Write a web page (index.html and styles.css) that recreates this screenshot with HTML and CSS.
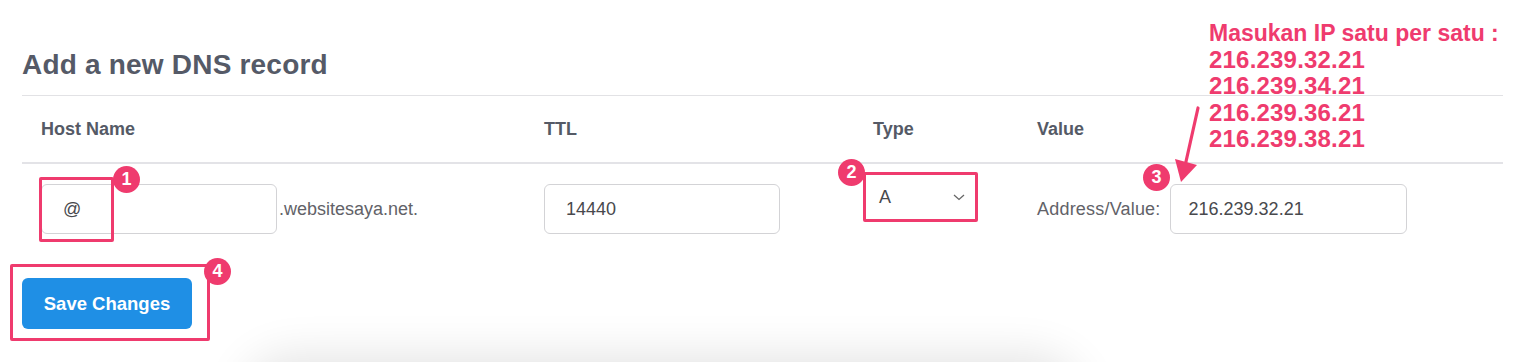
FILE: index.html
```html
<!DOCTYPE html>
<html lang="id">
<head>
<meta charset="utf-8">
<title>Add a new DNS record</title>
<link rel="stylesheet" href="styles.css">
</head>
<body>
<div class="page">
  <h1 class="title">Add a new DNS record</h1>
  <div class="table">
    <div class="row head">
      <div class="cell">Host Name</div>
      <div class="cell">TTL</div>
      <div class="cell">Type</div>
      <div class="cell">Value</div>
    </div>
    <div class="row body">
      <div class="cell host">
        <div class="input w236">@</div>
        <span class="suffix">.websitesaya.net.</span>
      </div>
      <div class="cell">
        <div class="input w236">14440</div>
      </div>
      <div class="cell">
        <div class="select">
          <span>A</span>
          <svg class="chev" width="12" height="7" viewBox="0 0 12 7"><path d="M1 1 L6 5.5 L11 1" fill="none" stroke="#666" stroke-width="1.3"/></svg>
        </div>
      </div>
      <div class="cell value">
        <span class="label">Address/Value:</span>
        <div class="input w237">216.239.32.21</div>
      </div>
    </div>
  </div>
  <button class="save">Save Changes</button>
  <div class="shadow-card"></div>

  <div class="note">Masukan IP satu per satu :<br><span class="ip">216.239.32.21<br>216.239.34.21<br>216.239.36.21<br>216.239.38.21</span></div>
  <svg class="arrow" width="40" height="90" viewBox="0 0 40 90">
    <path d="M26 4 L13 62" stroke="#ef3b6e" stroke-width="3.2" stroke-linecap="round" fill="none"/>
    <path d="M3 55 L25 61 L9 78 Z" fill="#ef3b6e"/>
  </svg>

  <div class="mark box1"></div>
  <div class="badge b1">1</div>
  <div class="mark box2"></div>
  <div class="badge b2">2</div>
  <div class="badge b3">3</div>
  <div class="mark box4"></div>
  <div class="badge b4">4</div>
</div>
</body>
</html>
```

FILE: styles.css
```css
html, body {
  margin: 0;
  padding: 0;
  background: #ffffff;
  overflow: hidden;
}
body {
  font-family: "Liberation Sans", Arial, sans-serif;
  color: #555a66;
}
.page {
  position: relative;
  width: 1481px;
  padding: 49px 0 0 22px;
}
.title {
  margin: 0 0 14px 0;
  font-size: 28px;
  line-height: 32px;
  font-weight: 700;
  color: #555a67;
  letter-spacing: 0.2px;
}
.table {
  border-top: 1px solid #e2e2e5;
}
.row {
  display: grid;
  grid-template-columns: 503px 329px 164px 485px;
}
.row.head {
  height: 66px;
  align-items: center;
  border-bottom: 2px solid #e3e3e7;
  font-size: 18px;
  font-weight: 700;
  color: #555a66;
}
.row.head .cell {
  padding-left: 19px;
}
.row.body {
  padding-top: 20px;
  align-items: center;
}
.row.body .cell {
  padding-left: 19px;
  display: flex;
  align-items: center;
}
.input {
  box-sizing: border-box;
  height: 50px;
  border: 1px solid #d3d3d6;
  border-radius: 6px;
  padding-left: 21px;
  display: flex;
  align-items: center;
  font-size: 18px;
  color: #48494d;
  background: #fff;
}
.w236 { width: 236px; }
.w237 { width: 237px; padding-left: 18px; }
.suffix {
  margin-left: 2px;
  font-size: 18px;
  color: #626268;
}
.select {
  box-sizing: border-box;
  margin-left: -7px;
  margin-top: -24px;
  width: 110px;
  height: 46px;
  display: flex;
  align-items: center;
  justify-content: space-between;
  padding: 0 11px 0 13px;
  font-size: 18px;
  color: #48494d;
}
.chev {
  display: block;
}
.value .label {
  font-size: 18px;
  color: #626268;
  margin-right: 9px;
  letter-spacing: 0.2px;
}
.save {
  display: block;
  margin-top: 44px;
  width: 170px;
  height: 51px;
  border: none;
  border-radius: 6px;
  background: #1f8fe5;
  color: #ffffff;
  font-family: "Liberation Sans", Arial, sans-serif;
  font-size: 18.5px;
  font-weight: 700;
  padding: 0;
}
.shadow-card {
  margin: 36px 0 0 230px;
  width: 820px;
  height: 120px;
  border-radius: 40px;
  box-shadow: 0 0 45px 10px rgba(0, 0, 0, 0.11);
}
.note {
  position: absolute;
  left: 1209px;
  top: 21px;
  font-size: 23px;
  line-height: 25.5px;
  font-weight: 700;
  color: #ef3b6e;
  white-space: nowrap;
}
.note .ip {
  font-size: 24px;
  letter-spacing: 0.2px;
}
.arrow {
  position: absolute;
  left: 1172px;
  top: 104px;
}
.mark {
  position: absolute;
  box-sizing: border-box;
  border: 3.5px solid #ef3b6e;
  border-radius: 2px;
}
.box1 { left: 39px; top: 177px; width: 75px; height: 65px; }
.box2 { left: 863px; top: 172px; width: 115px; height: 50px; }
.box4 { left: 10px; top: 264px; width: 200px; height: 77px; }
.badge {
  position: absolute;
  width: 27px;
  height: 27px;
  border-radius: 50%;
  background: #ef3b6e;
  color: #ffffff;
  font-size: 18px;
  font-weight: 700;
  line-height: 27px;
  text-align: center;
}
.b1 { left: 113px; top: 166px; }
.b2 { left: 838px; top: 159px; }
.b3 { left: 1143px; top: 164px; }
.b4 { left: 204px; top: 258px; }
```
